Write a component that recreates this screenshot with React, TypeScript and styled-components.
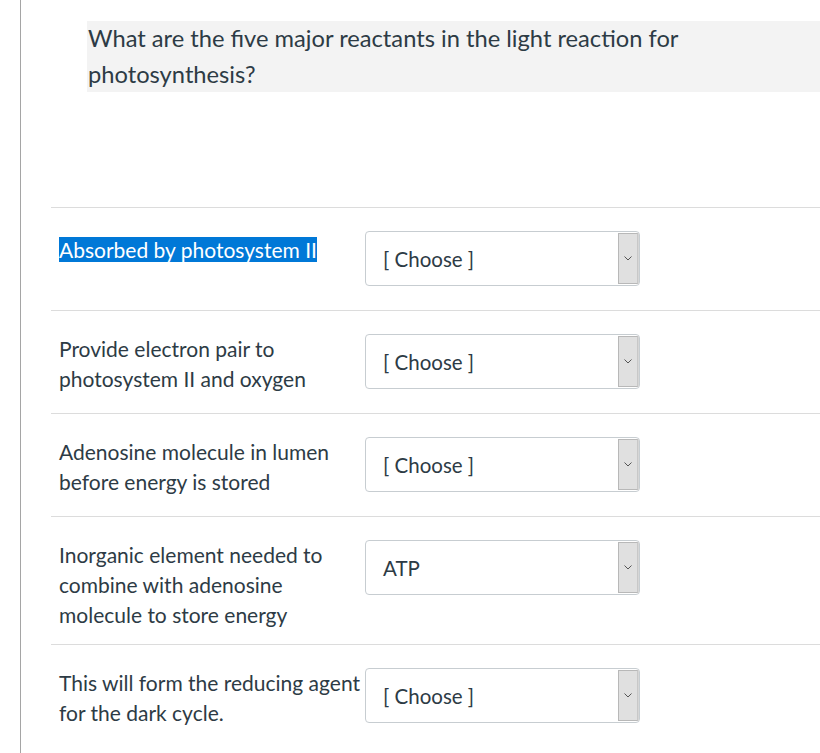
import React from "react";
import styled, { createGlobalStyle } from "styled-components";

const Global = createGlobalStyle`
  html, body { margin: 0; padding: 0; background: #fff; }
  body { font-family: Lato, "Open Sans", sans-serif; color: #2d3b45; }
`;

const Page = styled.div`
  margin-left: 20px;
  border-left: 1px solid #a5a5a5;
  min-height: 753px;
  padding-left: 30px;
  box-sizing: border-box;
  overflow: hidden;
`;

const Question = styled.div`
  margin: 21px 0 0 36px;
  padding: 0 0 0 1px;
  background: #f3f3f3;
  font-size: 23.7px;
  line-height: 35.5px;
  color: #2d3b45;
  height: 71px;
`;

const Answers = styled.div`
  margin-top: 115px;
`;

const Row = styled.div`
  display: flex;
  align-items: flex-start;
  border-top: 1px solid #dcdcdc;
  padding: 23px 0 14px 8px;
`;

const Label = styled.div<{ $shift?: number }>`
  width: 304px;
  flex: none;
  font-size: 21px;
  line-height: 30px;
  padding-top: ${(p) => p.$shift ?? 0}px;
  color: #2d3b45;
`;

const Highlight = styled.span`
  background: #0078d7;
  color: #fff;
`;

const Select = styled.div`
  margin-left: 2px;
  margin-bottom: 10px;
  width: 275px;
  height: 55px;
  box-sizing: border-box;
  border: 1px solid #c7cdd1;
  border-radius: 4px;
  display: flex;
  align-items: stretch;
  background: #fff;
  flex: none;
`;

const Value = styled.div`
  flex: 1;
  display: flex;
  align-items: center;
  padding-left: 17px;
  font-size: 20.5px;
  color: #2d3b45;
`;

const Arrow = styled.div`
  width: 20px;
  margin: 1px 1px 1px 0;
  background: #e0e0e0;
  border: 1px solid #b8b8b8;
  border-right-color: #c8c8c8;
  box-sizing: border-box;
  display: flex;
  align-items: center;
  justify-content: center;
  box-shadow: 1px 0 0 #d6d6d6;
`;

const Chevron = () => (
  <svg width="8" height="5" viewBox="0 0 8 5">
    <path d="M0.5 0.5 L4 4 L7.5 0.5" fill="none" stroke="#555" strokeWidth="1" />
  </svg>
);

type Item = { label: React.ReactNode; value: string; shift?: number };

const items: Item[] = [
  { label: <Highlight>Absorbed by photosystem II</Highlight>, value: "[ Choose ]", shift: 4 },
  { label: "Provide electron pair to photosystem II and oxygen", value: "[ Choose ]" },
  { label: "Adenosine molecule in lumen before energy is stored", value: "[ Choose ]" },
  { label: "Inorganic element needed to combine with adenosine molecule to store energy", value: "ATP" },
  { label: "This will form the reducing agent for the dark cycle.", value: "[ Choose ]" },
];

export default function App() {
  return (
    <>
      <Global />
      <Page>
        <Question>
          What are the five major reactants in the light reaction for
          <br />
          photosynthesis?
        </Question>
        <Answers>
          {items.map((it, i) => (
            <Row key={i}>
              <Label $shift={it.shift}>{it.label}</Label>
              <Select>
                <Value>{it.value}</Value>
                <Arrow>
                  <Chevron />
                </Arrow>
              </Select>
            </Row>
          ))}
        </Answers>
      </Page>
    </>
  );
}
